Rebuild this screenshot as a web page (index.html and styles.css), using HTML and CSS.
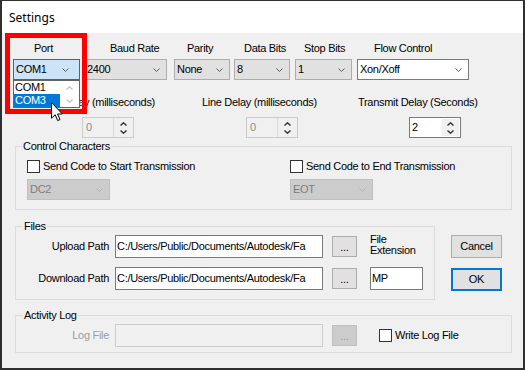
FILE: index.html
```html
<!DOCTYPE html>
<html>
<head>
<meta charset="utf-8">
<title>Settings</title>
<link rel="stylesheet" href="styles.css">
</head>
<body>
<div class="window">
  <div class="titlebar">Settings</div>
  <div class="content">
    <div class="serial-row">
      <div class="field f-port"><span class="lbl">Port</span><div class="combo focus"><span>COM1</span><svg class="chev" width="7" height="4" viewBox="0 0 7 4"><polyline points="0.5,0.5 3.5,3.5 6.5,0.5"/></svg></div></div>
      <div class="field f-baud"><span class="lbl">Baud Rate</span><div class="combo"><span>2400</span><svg class="chev" width="7" height="4" viewBox="0 0 7 4"><polyline points="0.5,0.5 3.5,3.5 6.5,0.5"/></svg></div></div>
      <div class="field f-parity"><span class="lbl">Parity</span><div class="combo"><span>None</span><svg class="chev" width="7" height="4" viewBox="0 0 7 4"><polyline points="0.5,0.5 3.5,3.5 6.5,0.5"/></svg></div></div>
      <div class="field f-data"><span class="lbl">Data Bits</span><div class="combo"><span>8</span><svg class="chev" width="7" height="4" viewBox="0 0 7 4"><polyline points="0.5,0.5 3.5,3.5 6.5,0.5"/></svg></div></div>
      <div class="field f-stop"><span class="lbl">Stop Bits</span><div class="combo"><span>1</span><svg class="chev" width="7" height="4" viewBox="0 0 7 4"><polyline points="0.5,0.5 3.5,3.5 6.5,0.5"/></svg></div></div>
      <div class="field f-flow"><span class="lbl">Flow Control</span><div class="combo edit"><span>Xon/Xoff</span><svg class="chev" width="7" height="4" viewBox="0 0 7 4"><polyline points="0.5,0.5 3.5,3.5 6.5,0.5"/></svg></div></div>
    </div>

    <div class="delay-row">
      <div class="delay d-byte"><span class="lbl">Char Delay (milliseconds)</span>
        <div class="spin"><span class="val">0</span><span class="arrows"><svg width="7" height="4" viewBox="0 0 7 4"><polyline points="0.5,3.5 3.5,0.8 6.5,3.5"/></svg><svg width="7" height="4" viewBox="0 0 7 4"><polyline points="0.5,0.5 3.5,3.2 6.5,0.5"/></svg></span></div>
      </div>
      <div class="delay d-line"><span class="lbl">Line Delay (milliseconds)</span>
        <div class="spin"><span class="val">0</span><span class="arrows"><svg width="7" height="4" viewBox="0 0 7 4"><polyline points="0.5,3.5 3.5,0.8 6.5,3.5"/></svg><svg width="7" height="4" viewBox="0 0 7 4"><polyline points="0.5,0.5 3.5,3.2 6.5,0.5"/></svg></span></div>
      </div>
      <div class="delay d-tx"><span class="lbl">Transmit Delay (Seconds)</span>
        <div class="spin on"><span class="val">2</span><span class="arrows"><svg width="7" height="4" viewBox="0 0 7 4"><polyline points="0.5,3.5 3.5,0.8 6.5,3.5"/></svg><svg width="7" height="4" viewBox="0 0 7 4"><polyline points="0.5,0.5 3.5,3.2 6.5,0.5"/></svg></span></div>
      </div>
    </div>

    <section class="group g-control">
      <div class="group-title">Control Characters</div>
      <div class="control-grid">
        <label class="check"><span class="box"></span><span>Send Code to Start Transmission</span></label>
        <label class="check"><span class="box"></span><span>Send Code to End Transmission</span></label>
        <div class="combo disabled w83"><span>DC2</span><svg class="chev" width="7" height="4" viewBox="0 0 7 4"><polyline points="0.5,0.5 3.5,3.5 6.5,0.5"/></svg></div>
        <div class="combo disabled w83"><span>EOT</span><svg class="chev" width="7" height="4" viewBox="0 0 7 4"><polyline points="0.5,0.5 3.5,3.5 6.5,0.5"/></svg></div>
      </div>
    </section>

    <div class="files-row">
      <section class="group g-files">
        <div class="group-title">Files</div>
        <div class="files-grid">
          <span class="path-lbl">Upload Path</span>
          <div class="text path">C:/Users/Public/Documents/Autodesk/Fa</div>
          <div class="btn dots">...</div>
          <span class="ext-lbl">File<br>Extension</span>
          <span class="path-lbl">Download Path</span>
          <div class="text path">C:/Users/Public/Documents/Autodesk/Fa</div>
          <div class="btn dots">...</div>
          <div class="text ext">MP</div>
        </div>
      </section>
      <div class="dialog-buttons">
        <div class="btn cancel">Cancel</div>
        <div class="btn ok">OK</div>
      </div>
    </div>

    <section class="group g-log">
      <div class="group-title">Activity Log</div>
      <div class="log-row">
        <span class="log-lbl">Log File</span>
        <div class="text off"></div>
        <div class="btn dots off">...</div>
        <label class="check log-check"><span class="box"></span><span>Write Log File</span></label>
      </div>
    </section>
  </div>

  <div class="port-callout"></div>
  <div class="port-list">
    <div class="opts">
      <div class="opt">COM1</div>
      <div class="opt sel">COM3</div>
    </div>
    <div class="sb">
      <svg width="7" height="4" viewBox="0 0 7 4"><polyline points="0.5,3.5 3.5,0.8 6.5,3.5"/></svg>
      <svg width="7" height="4" viewBox="0 0 7 4"><polyline points="0.5,0.5 3.5,3.2 6.5,0.5"/></svg>
    </div>
  </div>
  <svg class="cursor" width="13" height="20" viewBox="0 0 13 20"><path d="M0.5 0.5 L0.5 16.2 L4.2 12.8 L6.7 18.6 L9 17.6 L6.6 12 L11.4 12 Z"/></svg>
</div>
</body>
</html>
```
FILE: styles.css
```css
* { box-sizing: border-box; }
html, body { margin: 0; padding: 0; }
body {
  width: 525px;
  height: 370px;
  overflow: hidden;
  background: #ffffff;
  font-family: "Liberation Sans", Arial, sans-serif;
  font-size: 11px;
  letter-spacing: -0.3px;
  color: #000000;
}
.window {
  position: relative;
  width: 525px;
  height: 370px;
  border: 2px solid #2f2f2f;
  border-top-width: 1px;
  background: #f0f0f0;
  display: flex;
  flex-direction: column;
}
.titlebar {
  flex: none;
  height: 32px;
  background: #ffffff;
  padding: 9px 0 0 7px;
  font-family: "Noto Sans", sans-serif;
  font-size: 12px;
  line-height: 16px;
  letter-spacing: 0;
}
.content {
  flex: none;
  padding: 9px 0 0 11px;
  line-height: 13px;
}
.lbl { white-space: nowrap; height: 13px; }

/* row 1 */
.serial-row { display: flex; }
.field { display: flex; flex-direction: column; }
.field .lbl { margin-bottom: 4px; }
.f-port { width: 67px; }
.f-port .lbl { padding-left: 21px; }
.f-baud { width: 83px; margin-left: 4px; }
.f-baud .lbl { padding-left: 26px; }
.f-parity { width: 56px; margin-left: 7px; }
.f-parity .lbl { padding-left: 13px; }
.f-data { width: 56px; margin-left: 4px; }
.f-data .lbl { padding-left: 10px; }
.f-stop { width: 57px; margin-left: 5px; }
.f-stop .lbl { padding-left: 9px; }
.f-flow { width: 112px; margin-left: 5px; }
.f-flow .lbl { padding-left: 17px; }

.combo {
  height: 21px;
  display: flex;
  align-items: center;
  justify-content: space-between;
  padding: 0 6px 0 2px;
  border: 1px solid #adadad;
  background: #e1e1e1;
  white-space: nowrap;
}
.combo .chev polyline { fill: none; stroke: #5a5a5a; stroke-width: 1; }
.combo.focus { border-color: #0078d7; background: #cce4f7; }
.combo.focus .chev { margin-right: 4px; }
.combo.edit { background: #ffffff; border-color: #7a7a7a; }
.combo.disabled { background: #cccccc; border-color: #bfbfbf; color: #7d7d7d; }
.combo.disabled .chev polyline { stroke: #b0b0b0; }
.w83 { width: 83px; }

/* row 2 */
.delay-row { display: flex; margin-top: 16px; }
.delay { display: flex; flex-direction: column; }
.delay .lbl { margin-bottom: 8px; }
.d-byte { width: 189px; }
.d-byte .lbl { text-align: right; padding-right: 47px; }
.d-byte .spin { margin-left: 69px; }
.d-line { width: 156px; }
.d-line .spin { margin-left: 44px; }
.d-tx .spin { margin-left: 51px; }

.spin {
  width: 52px;
  height: 21px;
  display: flex;
  border: 1px solid #cccccc;
  background: #f0f0f0;
  color: #8b8b8b;
}
.spin .val { flex: 1; padding-left: 3px; line-height: 19px; }
.spin .arrows {
  width: 20px;
  border-left: 1px solid #d9d9d9;
  display: flex;
  flex-direction: column;
  align-items: center;
  justify-content: center;
  gap: 4px;
}
.spin .arrows polyline { fill: none; stroke: #333333; stroke-width: 1.4; }
.spin.on { border-color: #7a7a7a; background: #ffffff; color: #000000; }
.spin.on .val { padding-left: 2px; }
.spin.on .arrows { border-left: none; background: #f0f0f0; margin: 1px; width: 17px; }

/* group boxes */
.group {
  border: 1px solid #dcdcdc;
  margin-left: 2px;
}
.group-title {
  width: max-content;
  margin: -7px 0 0 6px;
  padding: 0 1px;
  background: #f0f0f0;
  line-height: 13px;
  white-space: nowrap;
}
.g-files .group-title, .g-log .group-title { margin-left: 7px; }

.g-control { margin-top: 8px; width: 497px; }
.control-grid {
  display: grid;
  grid-template-columns: 263px 200px;
  justify-items: start;
  row-gap: 6px;
  padding: 7px 0 9px 11px;
}
.check { display: flex; align-items: center; gap: 3px; height: 13px; white-space: nowrap; }
.box { width: 13px; height: 13px; border: 1px solid #333333; background: #ffffff; flex: none; }

/* files */
.files-row { display: flex; align-items: flex-start; margin-top: 16px; }
.g-files { width: 420px; flex: none; }
.files-grid {
  display: grid;
  grid-template-columns: 99px 217px 38px 53px;
  grid-template-rows: 25px 23px;
  row-gap: 9px;
  justify-items: start;
  padding: 0 0 9px 0;
}
.path-lbl { justify-self: stretch; align-self: end; text-align: right; padding-right: 6px; line-height: 23px; white-space: nowrap; }
.text {
  height: 23px;
  border: 1px solid #7a7a7a;
  background: #ffffff;
  padding-left: 1px;
  line-height: 21px;
  white-space: nowrap;
  overflow: hidden;
}
.path { width: 208px; align-self: end; }
.ext { width: 53px; }
.ext-lbl { align-self: start; line-height: 11px; white-space: nowrap; padding-top: 1px; }
.btn {
  border: 1px solid #adadad;
  background: #e1e1e1;
  display: flex;
  align-items: center;
  justify-content: center;
  white-space: nowrap;
}
.dots { width: 25px; height: 21px; line-height: 13px; padding-top: 2px; }
.files-grid .dots { align-self: end; margin-bottom: 1px; }
.dialog-buttons { width: 51px; margin-left: 16px; display: flex; flex-direction: column; flex: none; }
.cancel { height: 23px; margin-top: 9px; }
.ok { height: 23px; margin-top: 10px; border: 2px solid #0078d7; }

/* activity log */
.g-log { margin-top: 15px; width: 497px; }
.log-row { display: flex; align-items: center; padding: 2px 0 5px 0; }
.log-lbl { width: 93px; flex: none; text-align: right; color: #9d9d9d; white-space: nowrap; }
.text.off { width: 208px; flex: none; margin-left: 6px; background: #f0f0f0; border-color: #cccccc; }
.dots.off { margin-left: 9px; flex: none; background: #cccccc; border-color: #bfbfbf; color: #9a9a9a; }
.log-check { margin-left: 22px; }

/* overlays */
.port-callout {
  position: absolute;
  left: 3px;
  top: 32px;
  width: 82px;
  height: 81px;
  border: 5px solid #ff0000;
}
.port-list {
  position: absolute;
  left: 11px;
  top: 79px;
  width: 67px;
  height: 28px;
  border: 1px solid #646464;
  background: #ffffff;
  display: flex;
}
.opts { flex: 1; }
.opt { height: 13px; line-height: 13px; padding-left: 1px; white-space: nowrap; }
.opt.sel { background: #0078d7; color: #ffffff; }
.sb {
  width: 19px;
  display: flex;
  flex-direction: column;
  align-items: center;
  justify-content: space-between;
  padding: 5px 0 4px;
}
.sb polyline { fill: none; stroke: #c6c6c6; stroke-width: 1.4; }
.cursor { position: absolute; left: 49px; top: 101px; }
.cursor path { fill: #ffffff; stroke: #000000; stroke-width: 1; stroke-linejoin: miter; }
```
